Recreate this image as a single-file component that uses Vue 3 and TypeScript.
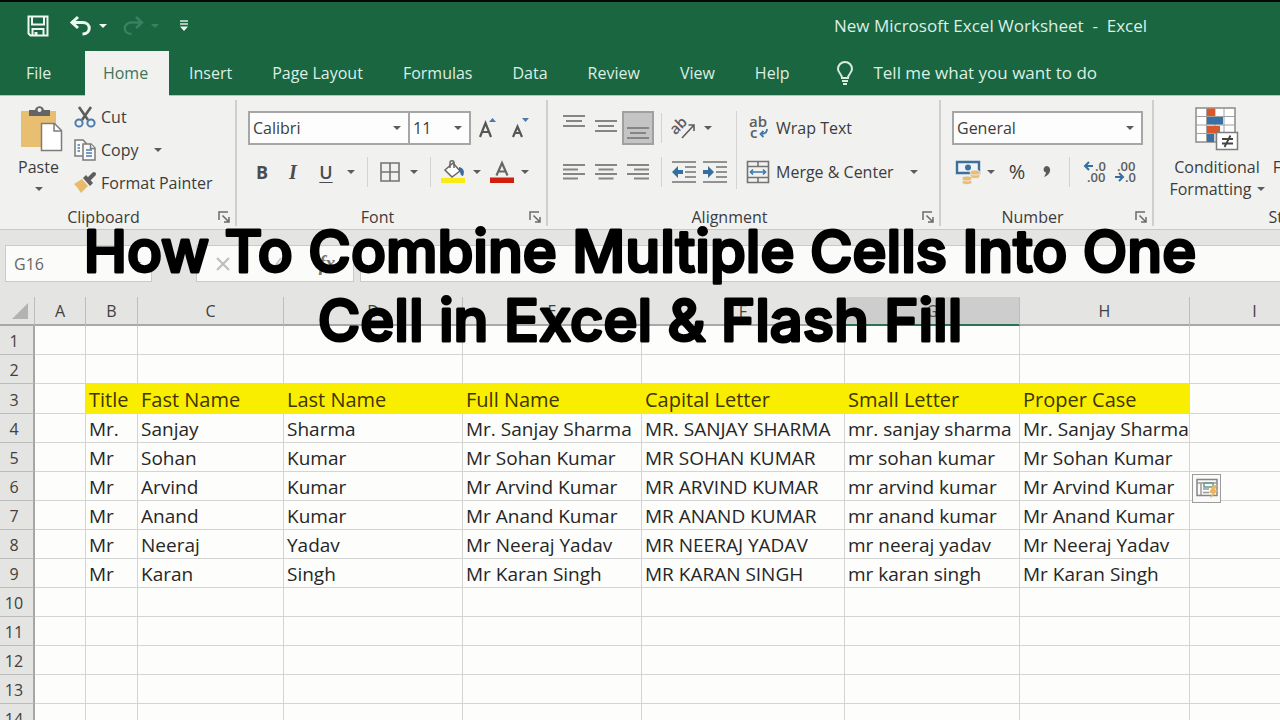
<script setup lang="ts">
import { ref } from 'vue'

const tabs = ['Insert', 'Page Layout', 'Formulas', 'Data', 'Review', 'View', 'Help']
const columns = ['A', 'B', 'C', 'D', 'E', 'F', 'G', 'H', 'I']
const activeColumn = 'G'

const records: Record<number, string[]> = {
  3: ['', 'Title', 'Fast Name', 'Last Name', 'Full Name', 'Capital Letter', 'Small Letter', 'Proper Case', ''],
  4: ['', 'Mr.', 'Sanjay', 'Sharma', 'Mr. Sanjay Sharma', 'MR. SANJAY SHARMA', 'mr. sanjay sharma', 'Mr. Sanjay Sharma', ''],
  5: ['', 'Mr', 'Sohan', 'Kumar', 'Mr Sohan Kumar', 'MR SOHAN KUMAR', 'mr sohan kumar', 'Mr Sohan Kumar', ''],
  6: ['', 'Mr', 'Arvind', 'Kumar', 'Mr Arvind Kumar', 'MR ARVIND KUMAR', 'mr arvind kumar', 'Mr Arvind Kumar', ''],
  7: ['', 'Mr', 'Anand', 'Kumar', 'Mr Anand Kumar', 'MR ANAND KUMAR', 'mr anand kumar', 'Mr Anand Kumar', ''],
  8: ['', 'Mr', 'Neeraj', 'Yadav', 'Mr Neeraj Yadav', 'MR NEERAJ YADAV', 'mr neeraj yadav', 'Mr Neeraj Yadav', ''],
  9: ['', 'Mr', 'Karan', 'Singh', 'Mr Karan Singh', 'MR KARAN SINGH', 'mr karan singh', 'Mr Karan Singh', ''],
}
const blank = columns.map(() => '')
const rows = Array.from({ length: 14 }, (_, i) => ({ n: i + 1, cells: records[i + 1] ?? blank }))

const fontName = ref('Calibri')
const fontSize = ref('11')
const numberFormat = ref('General')
const cellRef = ref('G16')
const formula = ref('')
</script>

<template>
  <div class="app">
    <header class="titlebar">
      <div class="quick">
        <button class="q save" aria-label="Save">
          <svg width="22" height="22" viewBox="0 0 22 22" fill="none" stroke="#eef8f2" stroke-width="2"><path d="M1.5 1.5h19v19h-17l-2-2z" /><path d="M5 2v7.500h12V2M5.500 20v-6h11v6" /><path d="M9 17v3" stroke-width="3" /></svg>
        </button>
        <button class="q undo" aria-label="Undo">
          <svg width="22" height="20" viewBox="0 0 22 20" fill="none" stroke="#eef8f2" stroke-width="3"><path d="M8 1L2 6.500 8 12M2.500 6.500h10c9 0 9 11.500 0 11.500" /></svg>
        </button>
        <button class="q more" aria-label="Undo history"><i class="caret light"></i></button>
        <button class="q undo" aria-label="Redo">
          <svg width="22" height="20" viewBox="0 0 22 20" fill="none" stroke="#3a8061" stroke-width="2.400"><path d="M14 1l6 5.500L14 12M19.500 6.500h-10c-9 0-9 11.500 0 11.500" /></svg>
        </button>
        <button class="q more" aria-label="Redo history"><i class="caret dim"></i></button>
        <button class="q custom" aria-label="Customize toolbar">
          <svg width="10" height="12" viewBox="0 0 10 12"><path d="M1 1h8M1 4h8" stroke="#d8ebe0" stroke-width="1.500" /><path d="M1 6.500h8L5 11z" fill="#f1faf5" /></svg>
        </button>
      </div>
      <div class="doc">New Microsoft Excel Worksheet &nbsp;-&nbsp; Excel</div>
    </header>

    <nav class="tabs">
      <button class="tab file">File</button>
      <button class="tab home">Home</button>
      <button v-for="t in tabs" :key="t" class="tab">{{ t }}</button>
      <button class="tab tell">
        <svg width="20" height="26" viewBox="0 0 20 26" fill="none" stroke="#d9ecdf" stroke-width="2"><path d="M7 18c0-4-4-5-4-9a7 7 0 0 1 14 0c0 4-4 5-4 9z" /><path d="M7 21h6M8 24h4" /></svg>
        Tell me what you want to do
      </button>
    </nav>

    <section class="ribbon">
      <div class="group g-clip">
        <div class="body clip">
          <button class="paste clipicon">
            <svg width="42" height="46" viewBox="0 0 42 46"><path d="M0 5h35v36H0z" fill="#e8bf71" /><path d="M8 4h6c1-5 8-5 9 0h6v6H8z" fill="#646464" /><circle cx="18.500" cy="4" r="2" fill="#f1f1f1" /><path d="M20.500 17.500h13l7 7v20h-20z" fill="#fff" stroke="#7c7c7c" stroke-width="1.500" /><path d="M33 18v7h7" fill="none" stroke="#7c7c7c" stroke-width="1.500" /></svg>
            <span>Paste</span>
            <i class="caret"></i>
          </button>
          <div class="stack">
            <button class="cmd">
              <svg width="22" height="22" viewBox="0 0 22 22" fill="none"><path d="M5 1l9 13M17 1L8 14" stroke="#5c5c5c" stroke-width="2.600" /><circle cx="5" cy="17" r="3.600" stroke="#4c7cae" stroke-width="2" /><circle cx="17" cy="17" r="3.600" stroke="#4c7cae" stroke-width="2" /></svg>Cut
            </button>
            <button class="cmd">
              <svg width="22" height="22" viewBox="0 0 22 22" fill="#fafafa" stroke="#7a7a7a" stroke-width="1.500"><path d="M1 1h8l3 3v13H1z" /><path d="M3.500 6H6M3.500 9H6M3.500 12H6" stroke="#4c7cae" /><path d="M9 5h8l4 4v12H9z" /><path d="M16.500 5v4.500H21" /><path d="M12 11h6M12 14h6M12 17h6" stroke="#4c7cae" /></svg>Copy<i class="caret after"></i>
            </button>
            <button class="cmd">
              <svg width="22" height="20" viewBox="0 0 22 20"><path d="M0 11l8-5 6 7-7 7c-2-3-4-6-7-9z" fill="#e8bb6c" /><path d="M9 5l3-3 7 8-3 3z" fill="#5d5d5d" /><path d="M15 6l5-5" stroke="#5d5d5d" stroke-width="4" stroke-linecap="round" /></svg>Format Painter
            </button>
          </div>
        </div>
        <footer><span>Clipboard</span><button class="launch" aria-label="Clipboard options"><svg width="12" height="12" viewBox="0 0 12 12" fill="none" stroke="#6b6b6b" stroke-width="1.500"><path d="M1 9V1h9M4.500 4.500L11 11M11 6v5H6" /></svg></button></footer>
      </div>

      <div class="group g-font">
        <div class="body rows">
          <div class="row">
            <label class="drop name"><select v-model="fontName" aria-label="Font"><option>Calibri</option></select><i class="caret"></i></label>
            <label class="drop size"><select v-model="fontSize" aria-label="Font size"><option>11</option></select><i class="caret"></i></label>
            <button class="w34" aria-label="Increase font size"><svg width="20" height="22" viewBox="0 0 20 22"><path d="M2 20L7.500 6 13 20M4 15h7" fill="none" stroke="#565656" stroke-width="2.200" /><path d="M11 5l3.500-4L18 5z" fill="#4b7aa8" /></svg></button>
            <button class="w32" aria-label="Decrease font size"><svg width="20" height="22" viewBox="0 0 20 22"><path d="M2 20L6.500 9.500 11 20M4 16h5.500" fill="none" stroke="#565656" stroke-width="2.200" /><path d="M11 1h7l-3.500 4z" fill="#4b7aa8" /></svg></button>
          </div>
          <div class="row">
            <button class="w28 glyph"><b>B</b></button>
            <button class="w34 glyph ital"><em>I</em></button>
            <button class="w32 glyph"><u>U</u></button>
            <button class="w18" aria-label="Underline styles"><i class="caret"></i></button>
            <i class="sep"></i>
            <button class="w30" aria-label="Borders"><svg width="20" height="20" viewBox="0 0 20 20" fill="none" stroke="#737373" stroke-width="1.600"><path d="M1 1h18v18H1zM10 1v18M1 10h18" /></svg></button>
            <button class="w18" aria-label="Border styles"><i class="caret"></i></button>
            <i class="sep"></i>
            <button class="w30" aria-label="Fill color"><svg width="24" height="24" viewBox="0 0 24 24"><path d="M4 10l8-7 7 8-8 6z" fill="#fff" stroke="#666" stroke-width="1.500" /><path d="M9 8V2.500c0-2.500 4-2.500 4 0V8" fill="none" stroke="#666" stroke-width="1.500" /><path d="M18 7c5 1 6 5 4 9-3 0-2-4-4-5z" fill="#3d6d9e" /><path d="M0 18h24v5H0z" fill="#f9ec16" /></svg></button>
            <button class="w18" aria-label="Fill colors"><i class="caret"></i></button>
            <button class="w32" aria-label="Font color"><svg width="24" height="24" viewBox="0 0 24 24"><path d="M6.500 15.500L12 3l5.500 12.500M8.500 11.500h7" fill="none" stroke="#666" stroke-width="2.200" /><path d="M0 17.500h24V23H0z" fill="#d21e10" /></svg></button>
            <button class="w14" aria-label="Font colors"><i class="caret"></i></button>
          </div>
        </div>
        <footer><span>Font</span><button class="launch" aria-label="Font options"><svg width="12" height="12" viewBox="0 0 12 12" fill="none" stroke="#6b6b6b" stroke-width="1.500"><path d="M1 9V1h9M4.500 4.500L11 11M11 6v5H6" /></svg></button></footer>
      </div>

      <div class="group g-align">
        <div class="body align">
          <div class="rows">
            <div class="row">
              <button class="w32" aria-label="Top align"><svg class="lines" viewBox="0 0 22 24"><path d="M0 0h22M3 5h16M0 10h22" /></svg></button>
              <button class="w32" aria-label="Middle align"><svg class="lines" viewBox="0 0 22 24"><path d="M0 5h22M3 10h16M0 15h22" /></svg></button>
              <button class="w32 on" aria-label="Bottom align"><svg class="lines" viewBox="0 0 22 24"><path d="M0 12h22M3 17h16M0 22h22" /></svg></button>
              <i class="sep"></i>
              <button class="w32" aria-label="Orientation"><svg width="26" height="26" viewBox="0 0 26 26"><text x="2" y="17" font-size="15" font-weight="600" fill="#5e5e5e" transform="rotate(-45 7 17)">ab</text><path d="M10 23L22 10M16.500 10H22v6" fill="none" stroke="#5e5e5e" stroke-width="1.600" /></svg></button>
              <button class="w14" aria-label="Orientation options"><i class="caret"></i></button>
            </div>
            <div class="row">
              <button class="w32" aria-label="Align left"><svg class="lines" viewBox="0 0 22 24"><path d="M0 5h22M0 9.500h15M0 14h22M0 18.500h15" /></svg></button>
              <button class="w32" aria-label="Center"><svg class="lines" viewBox="0 0 22 24"><path d="M0 5h22M3.500 9.500h15M0 14h22M3.500 18.500h15" /></svg></button>
              <button class="w32" aria-label="Align right"><svg class="lines" viewBox="0 0 22 24"><path d="M0 5h22M7 9.500h15M0 14h22M7 18.500h15" /></svg></button>
              <i class="sep"></i>
              <button class="w30" aria-label="Decrease indent"><svg class="indent" viewBox="0 0 24 24"><path d="M0 2h24M13 7h11M13 12h11M13 17h11M0 22h24" stroke="#929292" stroke-width="2" /><path d="M0 12l6-6v4h5v4H6v4z" fill="#356f9f" /></svg></button>
              <button class="w32" aria-label="Increase indent"><svg class="indent" viewBox="0 0 24 24"><path d="M0 2h24M13 7h11M13 12h11M13 17h11M0 22h24" stroke="#929292" stroke-width="2" /><path d="M11 12L5 6v4H0v4h5v4z" fill="#356f9f" /></svg></button>
            </div>
          </div>
          <i class="sep tall"></i>
          <div class="rows">
            <button class="cmd wide"><svg width="24" height="26" viewBox="0 0 24 26"><text x="3" y="12" font-size="15" font-weight="600" fill="#5e5e5e">ab</text><text x="4" y="23" font-size="15" font-weight="600" fill="#5e5e5e">c</text><path d="M21 14c0 4-2 5-6 5M17.500 16l-3 3 3 3" fill="none" stroke="#3f77a8" stroke-width="1.800" /></svg>Wrap Text</button>
            <button class="cmd wide"><svg width="24" height="24" viewBox="0 0 24 24" fill="none" stroke="#737373" stroke-width="1.600"><path d="M1.500 1.500h21v21h-21zM1.500 6.500h21M1.500 17.500h21M12 1.500v5M12 17.500v5" /><path d="M4 12h16M7 9.500L4.500 12 7 14.500M17 9.500l2.500 2.500-2.500 2.500" stroke="#3f77a8" /></svg>Merge &amp; Center<i class="caret after"></i></button>
          </div>
        </div>
        <footer><span>Alignment</span><button class="launch" aria-label="Alignment options"><svg width="12" height="12" viewBox="0 0 12 12" fill="none" stroke="#6b6b6b" stroke-width="1.500"><path d="M1 9V1h9M4.500 4.500L11 11M11 6v5H6" /></svg></button></footer>
      </div>

      <div class="group g-number">
        <div class="body rows number">
          <div class="row">
            <label class="drop format"><select v-model="numberFormat" aria-label="Number format"><option>General</option></select><i class="caret"></i></label>
          </div>
          <div class="row">
            <button class="w32" aria-label="Accounting format"><svg width="26" height="26" viewBox="0 0 26 26"><path d="M2 3h22v11H2z" fill="#eef4f8" stroke="#3c719c" stroke-width="2.400" /><circle cx="13" cy="8.500" r="3" fill="#3c719c" /><g fill="#e9bd78" stroke="#f1f1f1" stroke-width=".8"><ellipse cx="20" cy="17" rx="5" ry="2.500" /><ellipse cx="20" cy="13.500" rx="5" ry="2.500" /><ellipse cx="12" cy="23" rx="5" ry="2.500" /><ellipse cx="12" cy="19.500" rx="5" ry="2.500" /></g></svg></button>
            <button class="w14" aria-label="Accounting options"><i class="caret"></i></button>
            <button class="w38 pct">%</button>
            <button class="w22 comma" aria-label="Comma style"><svg width="8" height="12" viewBox="0 0 8 12"><path d="M4 0c5 1 4 9-3 11 1-2 2-3 2-4.500C-.5 6 0 0 4 0z" fill="#5a5a5a" /></svg></button>
            <i class="sep"></i>
            <button class="w30" aria-label="Increase decimal"><svg width="24" height="24" viewBox="0 0 24 24" font-size="13" font-weight="600" fill="#5e5e5e"><text x="11" y="11">.0</text><text x="3" y="22">.00</text><path d="M1 6h8M5 2L1 6l4 4" fill="none" stroke="#356f9f" stroke-width="2" /></svg></button>
            <button class="w30" aria-label="Decrease decimal"><svg width="24" height="24" viewBox="0 0 24 24" font-size="13" font-weight="600" fill="#5e5e5e"><text x="3" y="11">.00</text><text x="11" y="22">.0</text><path d="M1 17h8M5 13l4 4-4 4" fill="none" stroke="#356f9f" stroke-width="2" /></svg></button>
          </div>
        </div>
        <footer><span>Number</span><button class="launch" aria-label="Number options"><svg width="12" height="12" viewBox="0 0 12 12" fill="none" stroke="#6b6b6b" stroke-width="1.500"><path d="M1 9V1h9M4.500 4.500L11 11M11 6v5H6" /></svg></button></footer>
      </div>

      <div class="group styles">
        <div class="body clip">
          <button class="paste cond">
            <svg width="44" height="46" viewBox="0 0 44 46"><path d="M1 2h39v34H1z" fill="#fff" stroke="#8a8a8a" stroke-width="1.500" /><path d="M1 10.500h39M1 19h39M1 27.500h39M11.500 2v34M20 2v34M29 2v34" stroke="#a0a0a0" /><path d="M12 2.500h8V10h-8zM12 20h13v7H12z" fill="#d9572b" /><path d="M12 11h16v7.500H12zM12 28h7v8h-7z" fill="#3872a4" /><path d="M21.500 26.500h21v17h-21z" fill="#fff" stroke="#7d7d7d" stroke-width="1.500" /><path d="M27 33h11M27 37.500h11M35.500 29.500l-6 11.500" stroke="#444" stroke-width="1.800" /></svg>
            <span>Conditional</span>
            <span class="two">Formatting<i class="caret"></i></span>
          </button>
          <button class="paste tablefmt">
            <svg width="42" height="46" viewBox="0 0 42 46"><path d="M1 2h39v34H1z" fill="#fff" stroke="#8a8a8a" stroke-width="1.500" /></svg>
            <span>Format as</span>
            <span class="two">Table<i class="caret"></i></span>
          </button>
        </div>
        <footer><span>Styles</span><i class="launch"></i></footer>
      </div>
    </section>

    <section class="formula">
      <label class="box namebox"><input v-model="cellRef" aria-label="Name box" /><i class="caret"></i></label>
      <div class="box fxbox">
        <button aria-label="Cancel"><svg width="16" height="16" viewBox="0 0 16 16"><path d="M2 2l12 12M14 2L2 14" stroke="#bdbdbd" stroke-width="2" /></svg></button>
        <button aria-label="Enter"><svg width="16" height="14" viewBox="0 0 16 14"><path d="M2 8l4 4 8-11" fill="none" stroke="#c4c4c4" stroke-width="2" /></svg></button>
        <button class="fx">fx</button>
      </div>
      <input v-model="formula" class="box bar" aria-label="Formula" />
    </section>

    <main class="sheet">
      <table>
        <colgroup>
          <col class="c-head" /><col v-for="c in columns" :key="c" :class="'c-' + c" />
        </colgroup>
        <thead>
          <tr>
            <th class="corner"><svg width="18" height="18" viewBox="0 0 18 18"><path d="M17 1v16H1z" fill="#b3b3b3" /></svg></th>
            <th v-for="c in columns" :key="c" scope="col" :class="{ active: c === activeColumn }">{{ c }}</th>
          </tr>
        </thead>
        <tbody>
          <tr v-for="r in rows" :key="r.n" :class="{ heading: r.n === 3 }">
            <th scope="row">{{ r.n }}</th>
            <td v-for="(cell, i) in r.cells" :key="i" :class="{ fill: r.n === 3 && cell, host: r.n === 6 && i === 8 }">
              {{ cell }}
              <button v-if="r.n === 6 && i === 8" class="flash" aria-label="Flash fill options">
                <svg width="24" height="24" viewBox="0 0 24 24" fill="none"><path d="M2 2.500h20v16H2z" stroke="#858585" stroke-width="1.500" /><path d="M2 6h20M6 6v12M8 12h6M8 15.500h6" stroke="#9a9a9a" stroke-width="1.500" /><path d="M9 6h9v4H9z" stroke="#6a9c88" stroke-width="1.500" /><path d="M18 8h4l-2 5h3l-8 9 2-6h-3z" fill="#ecb65f" /></svg>
              </button>
            </td>
          </tr>
        </tbody>
      </table>
    </main>

    <h1 class="banner">
      <svg width="100%" height="140">
        <text x="50%" y="52">How To Combine Multiple Cells Into One</text>
        <text x="50%" y="121">Cell in Excel &amp; Flash Fill</text>
      </svg>
    </h1>
  </div>
</template>

<style>
body {
  margin: 0;
  overflow: hidden;
}
</style>

<style scoped>
.app {
  position: relative;
  display: flex;
  flex-direction: column;
  height: 100vh;
  overflow: hidden;
  background: #fdfdfc;
  color: #3c3c3c;
  font: 500 16px/20px "Open Sans", "Noto Sans", sans-serif;
}
* { box-sizing: border-box; }
button, select, input {
  margin: 0;
  padding: 0;
  border: 0;
  background: none;
  color: inherit;
  font: inherit;
}
button {
  display: flex;
  align-items: center;
  justify-content: center;
  white-space: nowrap;
}
svg { display: block; flex: none; overflow: visible; }
svg text { font-family: "Open Sans", "Noto Sans", sans-serif; }
.caret {
  flex: none;
  width: 0;
  height: 0;
  border: 4px solid transparent;
  border-top-color: #5c5c5c;
  border-bottom: 0;
}
.caret.light { border-top-color: #f1faf5; }
.caret.dim { border-top-color: #3a8061; }

.titlebar {
  display: flex;
  flex: none;
  align-items: center;
  height: 51px;
  padding-bottom: 2px;
  border-top: 2px solid #050a06;
  background: #196641;
  color: #dcefe4;
}
.quick {
  display: flex;
  flex: none;
  align-items: center;
  width: 65%;
  padding-left: 27px;
}
.save { margin-right: 21px; }
.more { width: 22px; }
.undo + .more { margin-right: 8px; }
.custom { margin-left: 5px; }
.doc { padding-left: 2px; font-size: 17px; white-space: nowrap; }

.tabs {
  display: flex;
  flex: none;
  height: 45px;
  border-bottom: 1px solid #a9ccb9;
  background: #196641;
  color: #dcefe4;
}
.tab { padding: 0 20px; }
.tab.file { justify-content: flex-start; width: 85px; padding: 0 0 0 26px; }
.tab.home { width: 84px; margin-bottom: -1px; padding: 0 3px 1px 0; background: #f1f1f0; color: #3d7558; }
.tab.tell { gap: 18px; padding-left: 26px; font-size: 17px; }

.ribbon {
  display: flex;
  flex: none;
  height: 133px;
  padding: 4px 0 3px;
  overflow: hidden;
  background: #f1f1f0;
}
.group {
  display: flex;
  flex: none;
  flex-direction: column;
  border-right: 2px solid #cfcfcf;
}
.g-clip { width: 237px; }
.g-font { width: 311px; }
.g-align { width: 393px; }
.g-number { width: 213px; }
.body { flex: 1; }
.rows {
  display: flex;
  flex-direction: column;
  gap: 10px;
}
.body.rows { padding: 11px 0 0 11px; }
.row { display: flex; height: 34px; }
.group footer { display: flex; height: 18px; align-items: center; }
.group footer span { flex: 1; text-align: center; line-height: 18px; }
.launch { width: 28px; height: 12px; padding-left: 11px; justify-content: flex-start; }

.clip { display: flex; padding-left: 17px; }
.paste { flex-direction: column; justify-content: flex-start; width: 43px; padding-top: 6px; }
.paste svg { margin-bottom: 4px; }
.clipicon svg { margin-left: 6px; }
.paste span { line-height: 22px; }
.paste > .caret { margin-top: 9px; }
.stack { display: flex; flex-direction: column; margin-left: 14px; }
.stack .cmd { height: 33px; }
.cmd { justify-content: flex-start; gap: 5px; }
.cmd .after { margin-left: 10px; }
.align { display: flex; padding: 11px 0 0 10px; }
.wide { height: 34px; gap: 6px; }

.drop { position: relative; display: flex; height: 34px; border: 2px solid #a6a6a6; background: #fdfdfd; }
.drop select { width: 100%; padding-left: 3px; appearance: none; outline: 0; }
.drop .caret { position: absolute; right: 7px; top: 13px; pointer-events: none; }
.name { width: 162px; }
.size { width: 63px; margin-left: -2px; }
.format { width: 191px; }
.w14 { width: 14px; }
.w18 { width: 18px; }
.w22 { width: 22px; }
.w28 { width: 28px; }
.w30 { width: 30px; }
.w32 { width: 32px; }
.w34 { width: 34px; }
.w38 { width: 38px; }
.glyph { font-size: 18px; color: #4c4c4c; }
.ital { font-family: "Liberation Serif", serif; font-size: 20px; font-weight: 700; }
.glyph u { font-weight: 600; text-underline-offset: 3px; }
.pct { font-size: 20px; }
.comma { align-items: flex-start; padding-top: 11px; }
.sep { flex: none; width: 1px; height: 30px; margin: 2px 7px; background: #d3d3d3; }
.sep.tall { height: 78px; margin: 0 9px 0 5px; }
.lines { width: 22px; height: 24px; stroke: #858585; stroke-width: 2; }
.indent { width: 24px; height: 24px; }
.on { border: 2px solid #a0a0a0; background: #c4c4c4; }
.number .sep { margin: 2px 11px; }

.styles { width: 302px; }
.styles .clip { padding-left: 13px; }
.cond { width: 100px; }
.two { display: flex; align-items: center; gap: 5px; }
.tablefmt { width: 86px; }

.formula {
  display: flex;
  flex: none;
  height: 68px;
  padding: 15px 0 0 5px;
  border-top: 1px solid #c9c9c9;
  background: #e4e4e3;
}
.box {
  display: flex;
  align-items: center;
  height: 37px;
  border: 1px solid #cacaca;
  background: #fbfbfa;
  outline: 0;
}
.namebox { width: 147px; margin-right: 44px; padding: 0 10px 0 8px; color: #666; }
.namebox input { flex: 1; min-width: 0; outline: 0; }
.fxbox { width: 158px; margin-right: 6px; }
.fxbox button { flex: 1; }
.fx { font: italic 700 20px "Liberation Serif", serif; color: #777; }
.bar { flex: 1; min-width: 0; border-right: 0; }

.sheet { flex: 1; min-height: 0; overflow: hidden; }
table {
  width: calc(100% + 40px);
  table-layout: fixed;
  border-collapse: separate;
  border-spacing: 0;
}
.c-head { width: 35px; }
.c-A { width: 51px; }
.c-B { width: 52px; }
.c-C { width: 146px; }
.c-D, .c-E { width: 179px; }
.c-F { width: 203px; }
.c-G { width: 175px; }
.c-H { width: 170px; }
th { padding: 0; font-weight: 500; color: #404040; background: #e4e4e3; }
thead th { height: 29px; border-right: 1px solid #bdbdbd; border-bottom: 2px solid #a8a8a8; }
thead th.active { background: #cdcdcd; border-bottom-color: #2b7453; color: #555; }
.corner svg { margin-left: 11px; }
tbody th {
  height: 29px;
  padding: 2px 5px 0 0;
  border-right: 2px solid #a6a6a6;
  border-bottom: 1px solid #bcbcbc;
}
td {
  height: 29px;
  padding: 2px 0 0 3px;
  border-right: 1px solid #d4d4d4;
  border-bottom: 1px solid #d4d4d4;
  color: #262626;
  font: 400 19px/24px "Open Sans", "Noto Sans", sans-serif;
  white-space: nowrap;
}
.heading th, .heading td { height: 30px; }
td.fill { border-color: #faee00; background: #faee00; color: #3d3600; font-size: 20px; }
.host { position: relative; }
.flash {
  position: absolute;
  top: 2px;
  left: 2px;
  width: 29px;
  height: 29px;
  border: 1px solid #9c9c9c;
  background: #fafafa;
}

.banner { position: absolute; top: 220px; left: 0; width: 100%; margin: 0; pointer-events: none; }
.banner text {
  font-family: Inter, "Liberation Sans", sans-serif;
  font-size: 58px;
  font-weight: 500;
  text-anchor: middle;
  fill: #000;
  stroke: #000;
  stroke-width: 3px;
  stroke-linejoin: round;
}
</style>
